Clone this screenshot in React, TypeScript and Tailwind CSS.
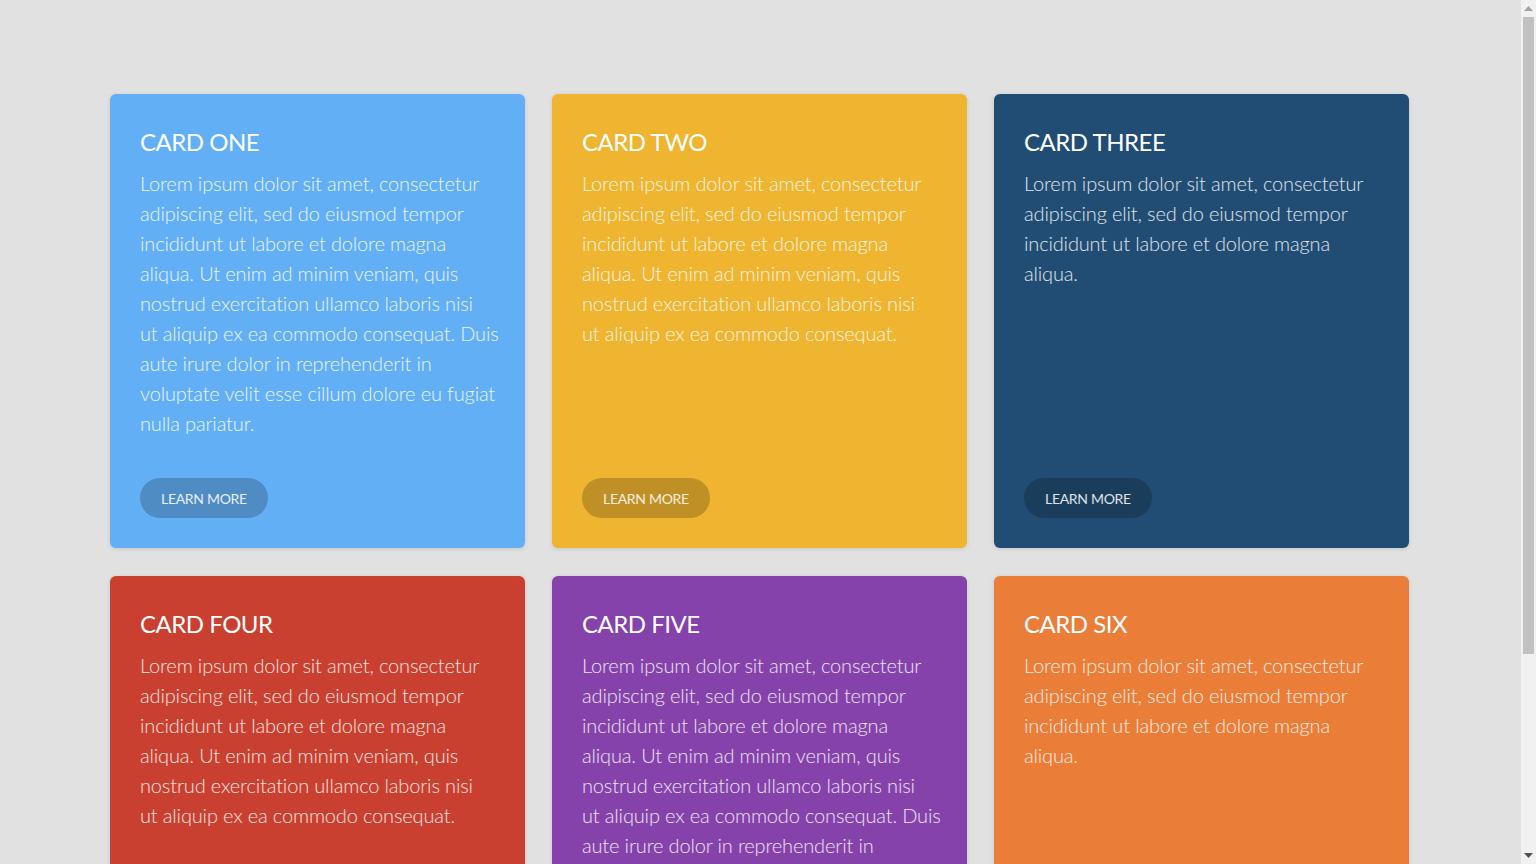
const LONG = [
  "Lorem ipsum dolor sit amet, consectetur",
  "adipiscing elit, sed do eiusmod tempor",
  "incididunt ut labore et dolore magna",
  "aliqua. Ut enim ad minim veniam, quis",
  "nostrud exercitation ullamco laboris nisi",
  "ut aliquip ex ea commodo consequat. Duis",
  "aute irure dolor in reprehenderit in",
  "voluptate velit esse cillum dolore eu fugiat",
  "nulla pariatur.",
];
const MEDIUM = LONG.slice(0, 5).concat(["ut aliquip ex ea commodo consequat."]);
const SHORT = LONG.slice(0, 3).concat(["aliqua."]);

type Card = { title: string; lines: string[]; bg: string };

const cards: Card[] = [
  { title: "CARD ONE", lines: LONG, bg: "bg-[#63aff5]" },
  { title: "CARD TWO", lines: MEDIUM, bg: "bg-[#efb430]" },
  { title: "CARD THREE", lines: SHORT, bg: "bg-[#214d74]" },
  { title: "CARD FOUR", lines: MEDIUM, bg: "bg-[#c94030]" },
  { title: "CARD FIVE", lines: LONG, bg: "bg-[#8542ab]" },
  { title: "CARD SIX", lines: SHORT, bg: "bg-[#ea7d38]" },
];

// Classic scrollbar rail with arrow buttons and a thumb
function ScrollRail() {
  return (
    <div className="flex h-screen w-[15px] shrink-0 flex-col bg-[#f1f1f1]">
      <div className="flex h-[17px] items-center justify-center">
        <svg width="9" height="5" viewBox="0 0 9 5">
          <path d="M4.5 0 L9 5 L0 5 Z" fill="#a3a3a3" />
        </svg>
      </div>
      <div className="flex flex-1 flex-col px-[2px]">
        <div className="h-[637px] bg-[#c1c1c1]" />
      </div>
      <div className="flex h-[17px] items-center justify-center">
        <svg width="9" height="5" viewBox="0 0 9 5">
          <path d="M0 0 L9 0 L4.5 5 Z" fill="#505050" />
        </svg>
      </div>
    </div>
  );
}

export default function App() {
  return (
    <div
      className="flex h-screen overflow-hidden bg-[#e1e1e1]"
      style={{ fontFamily: "Lato, 'Open Sans', sans-serif" }}
    >
      <main className="h-screen min-w-0 flex-1 overflow-y-auto">
        <div className="py-[94px] pr-[2px]">
          <div className="mx-auto grid w-[1299px] grid-cols-3 gap-x-[27px] gap-y-[28px]">
            {cards.map((c) => (
              <div
                key={c.title}
                className={`${c.bg} flex h-[454px] flex-col rounded-[6px] px-[30px] pt-[30px] pb-[30px] shadow-[0_1px_4px_rgba(0,0,0,0.12)]`}
              >
                <h2 className="text-[24px] font-normal leading-[36px] tracking-[-0.5px] text-white">
                  {c.title}
                </h2>
                <p className="mt-[8px] text-[20px] font-light leading-[30px] tracking-[-0.15px] text-white/85">
                  {c.lines.map((l, i) => (
                    <span key={i} className="block whitespace-nowrap">
                      {l}
                    </span>
                  ))}
                </p>
                <div className="mt-auto">
                  <button className="h-[40px] rounded-full bg-black/20 px-[21px] text-[14px] font-normal tracking-[-0.3px] text-white/85">
                    LEARN MORE
                  </button>
                </div>
              </div>
            ))}
          </div>
        </div>
      </main>
      <ScrollRail />
    </div>
  );
}
